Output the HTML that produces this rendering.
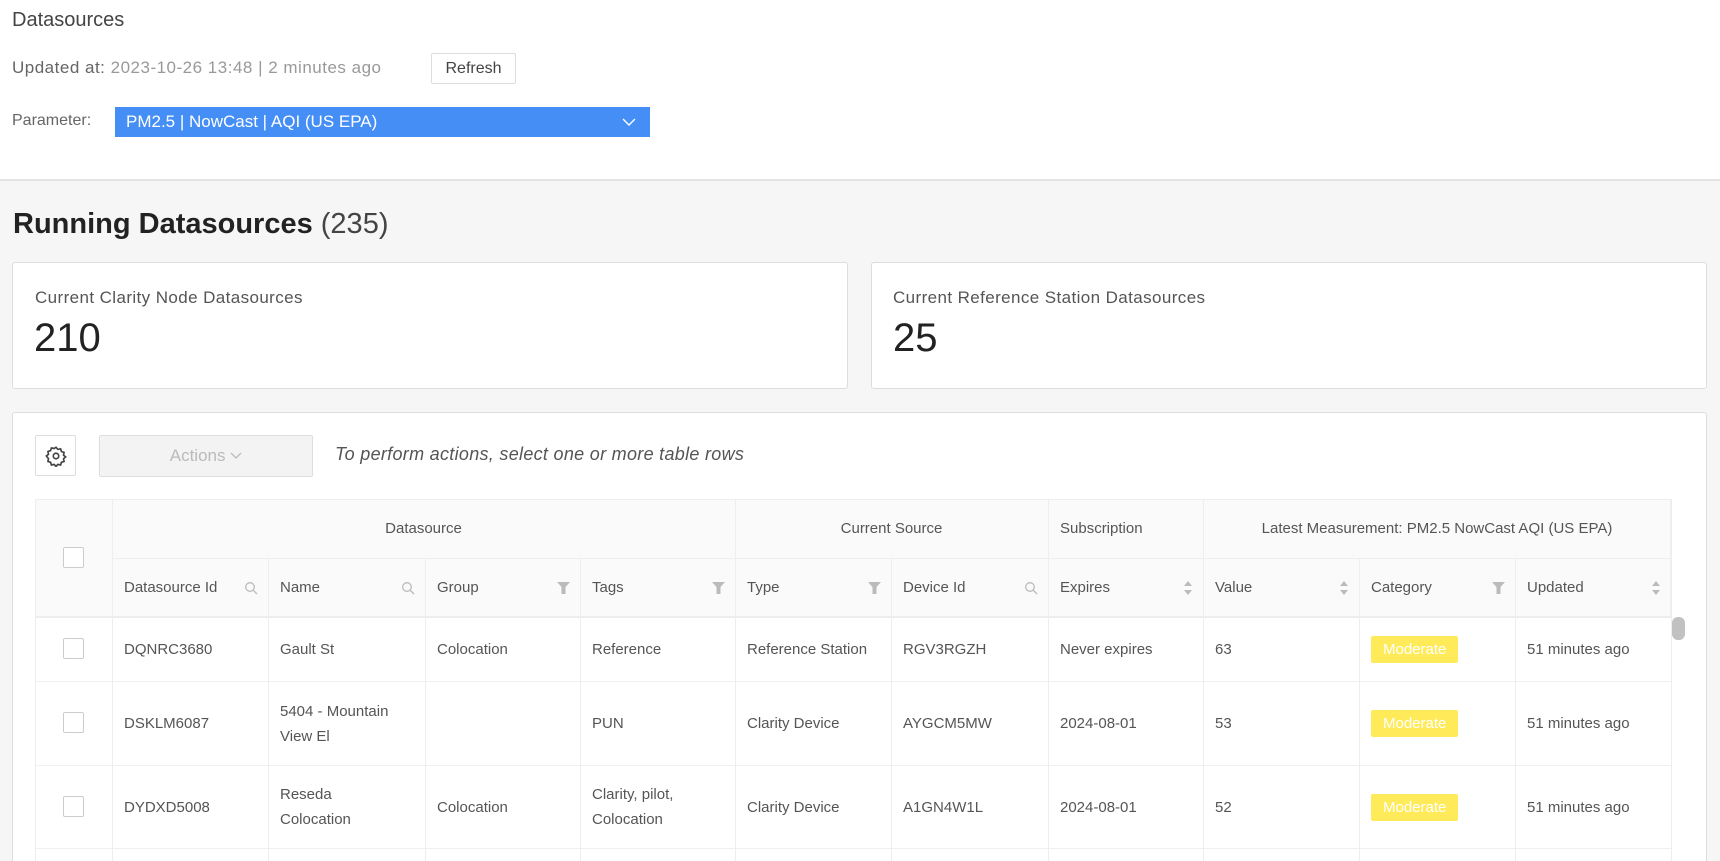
<!DOCTYPE html>
<html style="width:1720px;height:861px;overflow:hidden"><head><meta charset="utf-8"><style>
*{box-sizing:border-box;margin:0;padding:0}
body{width:1720px;height:861px;overflow:hidden;font-family:"Liberation Sans",sans-serif;color:#555;background:#f6f6f6;position:relative}
.a{position:absolute}
.top{left:0;top:0;width:1720px;height:181px;background:#fff;border-bottom:2px solid #e3e3e3}
.card{background:#fff;border:1px solid #ddd;border-radius:3px}
.cell{position:absolute;display:flex;align-items:center;padding-left:12px;font-size:15px;color:#555}
.hd{background:#fafafa}
.badge{background:#ffeb5a;color:#fff;font-size:15px;padding:5px 12px;border-radius:2px}
.cb{width:21px;height:21px;border:1px solid #ccc;border-radius:2px;background:#fff}
.ic{position:absolute;right:10px;top:50%;transform:translateY(-50%)}
</style></head><body>
<div class="a top"></div>
<div class="a" style="left:12px;top:9px;font-size:20px;color:#444">Datasources</div>
<div class="a" style="left:12px;top:58px;font-size:17px;letter-spacing:0.5px;color:#666">Updated at: <span style="color:#999">2023-10-26 13:48 | 2 minutes ago</span></div>
<div class="a" style="left:431px;top:53px;width:85px;height:31px;border:1px solid #ddd;border-radius:2px;font-size:16px;color:#444;display:flex;align-items:center;justify-content:center">Refresh</div>
<div class="a" style="left:12px;top:112px;font-size:16px;color:#666">Parameter:</div>
<div class="a" style="left:115px;top:107px;width:535px;height:30px;background:#448ef6;color:#fff;font-size:17px;padding-left:11px;display:flex;align-items:center">PM2.5 | NowCast | AQI (US EPA)
<svg class="a" style="right:14px;top:10px" width="14" height="10" viewBox="0 0 14 10"><path d="M1 2l6 6 6-6" stroke="#fff" stroke-width="1.4" fill="none"/></svg></div>

<div class="a" style="left:13px;top:208px;font-size:29px;color:#222"><b style="font-weight:bold">Running Datasources</b><span style="color:#444"> (235)</span></div>

<div class="a card" style="left:12px;top:262px;width:836px;height:127px"></div>
<div class="a" style="left:35px;top:288px;font-size:17px;letter-spacing:0.4px;color:#555">Current Clarity Node Datasources</div>
<div class="a" style="left:34px;top:316px;font-size:40px;color:#222">210</div>
<div class="a card" style="left:871px;top:262px;width:836px;height:127px"></div>
<div class="a" style="left:893px;top:288px;font-size:17px;letter-spacing:0.4px;color:#555">Current Reference Station Datasources</div>
<div class="a" style="left:893px;top:316px;font-size:40px;color:#222">25</div>

<div class="a card" style="left:12px;top:412px;width:1695px;height:452px"></div>
<div class="a" style="left:35px;top:435px;width:41px;height:41px;border:1px solid #ddd;border-radius:2px;background:#fff;display:flex;align-items:center;justify-content:center">
<svg width="22" height="22" viewBox="0 0 24 24" fill="none" stroke="#444" stroke-width="1.8"><circle cx="12" cy="12" r="3"/><path d="M12 2.5l2 2.3 3-.6.9 2.9 2.9 1-.6 3 2.3 1.9-2.3 2 .6 2.9-2.9 1-.9 2.9-3-.6-2 2.2-2-2.2-3 .6-.9-2.9-2.9-1 .6-2.9L1.5 12l2.3-1.9-.6-3 2.9-1 .9-2.9 3 .6z"/></svg></div>
<div class="a" style="left:99px;top:435px;width:214px;height:42px;background:#f3f3f3;border:1px solid #ddd;border-radius:2px;color:#bbb;font-size:17px;display:flex;align-items:center;justify-content:center">Actions&nbsp;<svg width="12" height="8" viewBox="0 0 12 8"><path d="M1 1l5 5 5-5" stroke="#bbb" stroke-width="1.3" fill="none"/></svg></div>
<div class="a" style="left:335px;top:444px;font-size:18px;letter-spacing:0.3px;color:#555;font-style:italic">To perform actions, select one or more table rows</div>

<div class="a hd" style="left:35px;top:499px;width:1636px;height:118px;border:1px solid #eee"></div>
<div class="a" style="left:1671px;top:499px;width:14px;height:370px;background:#fff;border-left:1px solid #eee"></div>
<div class="a" style="left:1672px;top:617px;width:13px;height:23px;background:#c1c1c1;border-radius:6px"></div>
<div class="a" style="left:112px;top:558px;width:1559px;height:1px;background:#eee"></div>
<div class="a" style="left:35px;top:617px;width:1636px;height:1px;background:#eee"></div>
<div class="a" style="left:35px;top:681px;width:1636px;height:1px;background:#f0f0f0"></div>
<div class="a" style="left:35px;top:765px;width:1636px;height:1px;background:#f0f0f0"></div>
<div class="a" style="left:35px;top:848px;width:1636px;height:1px;background:#f0f0f0"></div>
<div class="a" style="left:35px;top:499px;width:1px;height:370px;background:#eee"></div>
<div class="a" style="left:112px;top:499px;width:1px;height:370px;background:#eee"></div>
<div class="a" style="left:735px;top:499px;width:1px;height:370px;background:#eee"></div>
<div class="a" style="left:1048px;top:499px;width:1px;height:370px;background:#eee"></div>
<div class="a" style="left:1203px;top:499px;width:1px;height:370px;background:#eee"></div>
<div class="a" style="left:268px;top:558px;width:1px;height:311px;background:#eee"></div>
<div class="a" style="left:425px;top:558px;width:1px;height:311px;background:#eee"></div>
<div class="a" style="left:580px;top:558px;width:1px;height:311px;background:#eee"></div>
<div class="a" style="left:891px;top:558px;width:1px;height:311px;background:#eee"></div>
<div class="a" style="left:1359px;top:558px;width:1px;height:311px;background:#eee"></div>
<div class="a" style="left:1515px;top:558px;width:1px;height:311px;background:#eee"></div>

<div class="cell" style="left:112px;top:499px;width:623px;height:59px;justify-content:center;padding:0">Datasource</div>
<div class="cell" style="left:735px;top:499px;width:313px;height:59px;justify-content:center;padding:0">Current Source</div>
<div class="cell" style="left:1048px;top:499px;width:155px;height:59px">Subscription</div>
<div class="cell" style="left:1203px;top:499px;width:468px;height:59px;justify-content:center;padding:0">Latest Measurement: PM2.5 NowCast AQI (US EPA)</div>
<div class="a cb" style="left:63px;top:547px"></div>

<div class="cell" style="left:112px;top:558px;width:156px;height:59px">Datasource Id<svg class="ic" width="14" height="14" viewBox="0 0 14 14"><circle cx="6" cy="6" r="4.3" stroke="#bbb" stroke-width="1.3" fill="none"/><path d="M9 9l4 4" stroke="#bbb" stroke-width="1.3"/></svg></div>
<div class="cell" style="left:268px;top:558px;width:157px;height:59px">Name<svg class="ic" width="14" height="14" viewBox="0 0 14 14"><circle cx="6" cy="6" r="4.3" stroke="#bbb" stroke-width="1.3" fill="none"/><path d="M9 9l4 4" stroke="#bbb" stroke-width="1.3"/></svg></div>
<div class="cell" style="left:425px;top:558px;width:155px;height:59px">Group<svg class="ic" width="13" height="14" viewBox="0 0 13 14"><path d="M0 1h13l-4.5 5v7h-4v-7z" fill="#bbb"/></svg></div>
<div class="cell" style="left:580px;top:558px;width:155px;height:59px">Tags<svg class="ic" width="13" height="14" viewBox="0 0 13 14"><path d="M0 1h13l-4.5 5v7h-4v-7z" fill="#bbb"/></svg></div>
<div class="cell" style="left:735px;top:558px;width:156px;height:59px">Type<svg class="ic" width="13" height="14" viewBox="0 0 13 14"><path d="M0 1h13l-4.5 5v7h-4v-7z" fill="#bbb"/></svg></div>
<div class="cell" style="left:891px;top:558px;width:157px;height:59px">Device Id<svg class="ic" width="14" height="14" viewBox="0 0 14 14"><circle cx="6" cy="6" r="4.3" stroke="#bbb" stroke-width="1.3" fill="none"/><path d="M9 9l4 4" stroke="#bbb" stroke-width="1.3"/></svg></div>
<div class="cell" style="left:1048px;top:558px;width:155px;height:59px">Expires<svg class="ic" width="10" height="16" viewBox="0 0 10 16"><path d="M5 1l4 5H1zM5 15l4-5H1z" fill="#bbb"/></svg></div>
<div class="cell" style="left:1203px;top:558px;width:156px;height:59px">Value<svg class="ic" width="10" height="16" viewBox="0 0 10 16"><path d="M5 1l4 5H1zM5 15l4-5H1z" fill="#bbb"/></svg></div>
<div class="cell" style="left:1359px;top:558px;width:156px;height:59px">Category<svg class="ic" width="13" height="14" viewBox="0 0 13 14"><path d="M0 1h13l-4.5 5v7h-4v-7z" fill="#bbb"/></svg></div>
<div class="cell" style="left:1515px;top:558px;width:156px;height:59px">Updated<svg class="ic" width="10" height="16" viewBox="0 0 10 16"><path d="M5 1l4 5H1zM5 15l4-5H1z" fill="#bbb"/></svg></div>

<div class="a cb" style="left:63px;top:638px"></div>
<div class="cell" style="left:112px;top:618px;width:156px;height:63px">DQNRC3680</div>
<div class="cell" style="left:268px;top:618px;width:157px;height:63px">Gault St</div>
<div class="cell" style="left:425px;top:618px;width:155px;height:63px">Colocation</div>
<div class="cell" style="left:580px;top:618px;width:155px;height:63px">Reference</div>
<div class="cell" style="left:735px;top:618px;width:156px;height:63px">Reference Station</div>
<div class="cell" style="left:891px;top:618px;width:157px;height:63px">RGV3RGZH</div>
<div class="cell" style="left:1048px;top:618px;width:155px;height:63px">Never expires</div>
<div class="cell" style="left:1203px;top:618px;width:156px;height:63px">63</div>
<div class="cell" style="left:1359px;top:618px;width:156px;height:63px"><span class="badge">Moderate</span></div>
<div class="cell" style="left:1515px;top:618px;width:156px;height:63px">51 minutes ago</div>

<div class="a cb" style="left:63px;top:712px"></div>
<div class="cell" style="left:112px;top:682px;width:156px;height:83px">DSKLM6087</div>
<div class="cell" style="left:268px;top:682px;width:157px;height:83px;line-height:25px">5404 - Mountain<br>View El</div>
<div class="cell" style="left:580px;top:682px;width:155px;height:83px">PUN</div>
<div class="cell" style="left:735px;top:682px;width:156px;height:83px">Clarity Device</div>
<div class="cell" style="left:891px;top:682px;width:157px;height:83px">AYGCM5MW</div>
<div class="cell" style="left:1048px;top:682px;width:155px;height:83px">2024-08-01</div>
<div class="cell" style="left:1203px;top:682px;width:156px;height:83px">53</div>
<div class="cell" style="left:1359px;top:682px;width:156px;height:83px"><span class="badge">Moderate</span></div>
<div class="cell" style="left:1515px;top:682px;width:156px;height:83px">51 minutes ago</div>

<div class="a cb" style="left:63px;top:796px"></div>
<div class="cell" style="left:112px;top:766px;width:156px;height:82px">DYDXD5008</div>
<div class="cell" style="left:268px;top:766px;width:157px;height:82px;line-height:25px">Reseda<br>Colocation</div>
<div class="cell" style="left:425px;top:766px;width:155px;height:82px">Colocation</div>
<div class="cell" style="left:580px;top:766px;width:155px;height:82px;line-height:25px">Clarity, pilot,<br>Colocation</div>
<div class="cell" style="left:735px;top:766px;width:156px;height:82px">Clarity Device</div>
<div class="cell" style="left:891px;top:766px;width:157px;height:82px">A1GN4W1L</div>
<div class="cell" style="left:1048px;top:766px;width:155px;height:82px">2024-08-01</div>
<div class="cell" style="left:1203px;top:766px;width:156px;height:82px">52</div>
<div class="cell" style="left:1359px;top:766px;width:156px;height:82px"><span class="badge">Moderate</span></div>
<div class="cell" style="left:1515px;top:766px;width:156px;height:82px">51 minutes ago</div>
</body></html>
